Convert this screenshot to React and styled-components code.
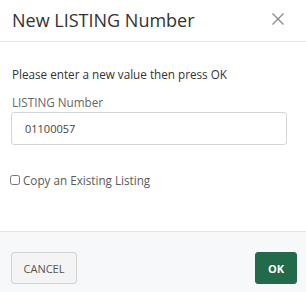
import React from 'react';
import styled, { createGlobalStyle } from 'styled-components';

const Global = createGlobalStyle`
  html, body { margin: 0; padding: 0; background: #fff; }
  body { font-family: "Open Sans", "Noto Sans", sans-serif; }
`;

export default function App() {
    return (
        <Dialog>
            <Global />
            <Header>
                <Title>New LISTING Number</Title>
                <Close aria-label="close">
                    <svg width="12" height="12" viewBox="0 0 12 12">
                        <path d="M0.5 0.5 L11.5 11.5 M11.5 0.5 L0.5 11.5" stroke="#8a8a8a" strokeWidth="1.3" fill="none" />
                    </svg>
                </Close>
            </Header>

            <Body>
                <Prompt>Please enter a new value then press OK</Prompt>
                <Label>LISTING Number</Label>
                <Input defaultValue="01100057" />
                <CheckRow>
                    <Check type="checkbox" />
                    Copy an Existing Listing
                </CheckRow>
            </Body>

            <Footer>
                <Button>CANCEL</Button>
                <Button primary>OK</Button>
            </Footer>
        </Dialog>
    );
}

const Dialog = styled.div`
  width: 306px;
  height: 292px;
  display: flex;
  flex-direction: column;
  background: #fff;
`;

const Header = styled.div`
  height: 42px;
  box-sizing: border-box;
  border-bottom: 1px solid #e5e5e5;
  display: flex;
  align-items: center;
  justify-content: space-between;
  padding: 0 22px 2px 12px;
`;

const Title = styled.h1`
  margin: 0;
  font-size: 18px;
  font-weight: 400;
  color: #333;
`;

const Close = styled.button`
  border: 0;
  background: none;
  padding: 0;
  display: flex;
  margin-bottom: 1px;
`;

const Body = styled.div`
  flex: 1;
  padding: 24px 19px 0 11px;
  display: flex;
  flex-direction: column;
`;

const Prompt = styled.p`
  margin: 0 0 0 1px;
  font-size: 11.7px;
  color: #333;
  line-height: 16px;
`;

const Label = styled.label`
  margin: 12px 0 0 1px;
  font-size: 11.7px;
  color: #666;
  line-height: 16px;
`;

const Input = styled.input`
  margin-top: 2px;
  height: 33px;
  box-sizing: border-box;
  border: 1px solid #d2d5da;
  border-radius: 3px;
  padding: 0 13px;
  font-family: inherit;
  font-size: 11px;
  color: #444;
  outline: none;
`;

const CheckRow = styled.label`
  margin-top: 27px;
  display: flex;
  align-items: center;
  gap: 3px;
  font-size: 11.7px;
  color: #5a5a5a;
`;

const Check = styled.input`
  margin: 0 0 0 -1px;
  width: 10px;
  height: 10px;
`;

const Footer = styled.div`
  height: 61px;
  box-sizing: border-box;
  border-top: 1px solid #e1e3e6;
  background: #f7f8fa;
  display: flex;
  justify-content: space-between;
  align-items: flex-start;
  padding: 20px 9px 0 11px;
`;

const Button = styled.button`
  height: 32px;
  box-sizing: border-box;
  border-radius: 3px;
  font-family: inherit;
  font-size: 11px;
  padding: 0;
  width: ${p => (p.primary ? '42px' : '66px')};
  border: 1px solid ${p => (p.primary ? '#226a49' : '#d3d3d3')};
  background: ${p => (p.primary ? '#226a49' : '#f4f4f4')};
  color: ${p => (p.primary ? '#fff' : '#555')};
  font-weight: ${p => (p.primary ? 700 : 400)};
`;
